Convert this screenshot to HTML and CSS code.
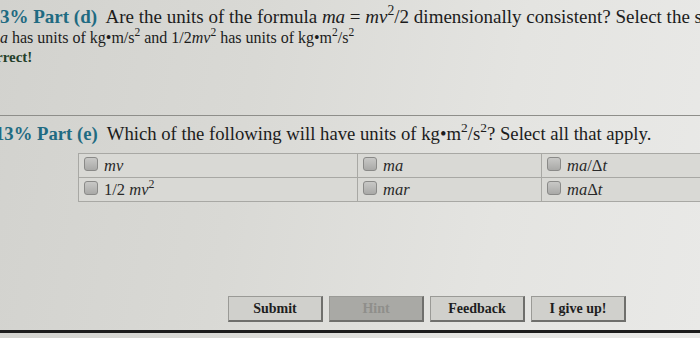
FILE: index.html
```html
<!DOCTYPE html>
<html>
<head>
<meta charset="utf-8">
<link rel="stylesheet" href="styles.css">
</head>
<body>
<div class="page">
  <div class="part-d">
    <p class="q"><span class="part">3% Part (d)</span>&nbsp; Are the units of the formula <i>ma</i> = <i>mv</i><sup>2</sup>/2 dimensionally consistent? Select the statement</p>
    <p class="ans"><i>a</i> has units of kg•m/s<sup>2</sup> and 1/2<i>mv</i><sup>2</sup> has units of kg•m<sup>2</sup>/s<sup>2</sup></p>
    <p class="ok">rrect!</p>
  </div>
  <div class="rule"></div>
  <div class="part-e">
    <p class="q q-e"><span class="part">13% Part (e)</span>&nbsp; Which of the following will have units of kg•m<sup>2</sup>/s<sup>2</sup>? Select all that apply.</p>
    <div class="opts">
      <div class="cell"><span class="cb"></span><span class="lbl"><i>mv</i></span></div>
      <div class="cell"><span class="cb"></span><span class="lbl"><i>ma</i></span></div>
      <div class="cell"><span class="cb"></span><span class="lbl"><i>ma</i>/Δ<i>t</i></span></div>
      <div class="cell"><span class="cb"></span><span class="lbl">1/2 <i>mv</i><sup>2</sup></span></div>
      <div class="cell"><span class="cb"></span><span class="lbl"><i>mar</i></span></div>
      <div class="cell"><span class="cb"></span><span class="lbl"><i>ma</i>Δ<i>t</i></span></div>
    </div>
    <div class="buttons">
      <button class="btn">Submit</button>
      <button class="btn btn-off">Hint</button>
      <button class="btn">Feedback</button>
      <button class="btn">I give up!</button>
    </div>
  </div>
  <div class="bottom-line"></div>
</div>
</body>
</html>
```
FILE: styles.css
```css
html, body {
  margin: 0;
  padding: 0;
}
body {
  width: 700px;
  height: 338px;
  overflow: hidden;
  font-family: "Liberation Serif", "Times New Roman", serif;
  color: #1c1c1c;
  background: linear-gradient(100deg, #d2d2ce 0%, #d9d9d5 35%, #e4e4e1 70%, #e9e9e7 100%);
}
.page {
  width: 700px;
  height: 338px;
  overflow: hidden;
  position: relative;
}
p { margin: 0; white-space: nowrap; }
sup { font-size: 0.72em; line-height: 0; vertical-align: 0.6em; }
.part-d { padding-top: 6px; }
.q {
  font-size: 19px;
  line-height: 21px;
}
.part {
  color: #1f6b82;
  font-weight: bold;
}
.ans {
  font-size: 16px;
  line-height: 18px;
  margin-top: 2px;
}
.ok {
  font-size: 15px;
  font-weight: bold;
  color: #24402a;
  line-height: 18px;
  margin-top: 1px;
  margin-left: -4px;
}
.rule {
  margin-top: 49px;
  height: 1px;
  background: #8e8e8a;
}
.part-e { padding-top: 7px; }
.q-e { margin-left: -5px; font-size: 18.7px; }
.opts {
  margin: 9px 0 0 78px;
  width: 640px;
  display: grid;
  grid-template-columns: 279px 184px 1fr;
  grid-template-rows: 24px 24px;
  border-top: 1px solid #a8a8a4;
  border-left: 1px solid #a8a8a4;
  background: #d9d9d5;
}
.cell {
  border-right: 1px solid #a8a8a4;
  border-bottom: 1px solid #a8a8a4;
  display: flex;
  align-items: center;
  padding-left: 5px;
  font-size: 16.5px;
  color: #2a2a2a;
}
.lbl { white-space: nowrap; }
.cb {
  width: 12px;
  height: 12px;
  border: 1px solid #8a8a88;
  border-radius: 3px;
  background: linear-gradient(#c8c8c6, #a9a9a7);
  margin-right: 6px;
  margin-top: -3px;
  flex: none;
}
.buttons {
  margin: 94px 0 0 228px;
  display: flex;
  gap: 6px;
}
.btn {
  width: 95px;
  height: 26px;
  font-family: "Liberation Serif", "Times New Roman", serif;
  font-weight: bold;
  font-size: 14px;
  color: #1e1e1e;
  background: #d0d0cc;
  border: 1px solid #9a9a96;
  border-right: 2px solid #6f6f6c;
  border-bottom: 2px solid #6f6f6c;
  padding: 0;
}
.btn-off {
  background: #a9a9a5;
  color: #8f8f8b;
}
.bottom-line {
  position: absolute;
  left: 0;
  right: 0;
  top: 330px;
  height: 3px;
  background: #1c1c1c;
}
```
